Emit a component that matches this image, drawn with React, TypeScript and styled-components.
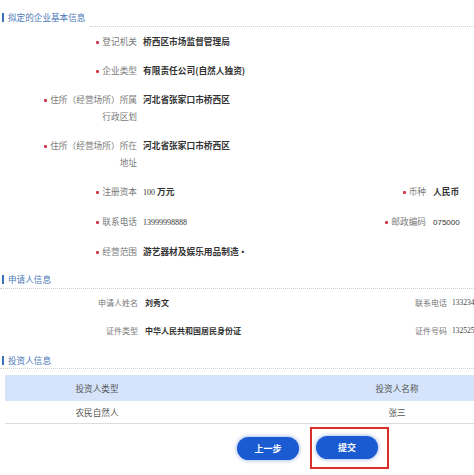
import { Fragment } from "react";
import styled, { createGlobalStyle } from "styled-components";

const GlobalStyle = createGlobalStyle`
  html, body {
    margin: 0;
    padding: 0;
    background: #ffffff;
  }
  body {
    font-family: "Noto Sans CJK SC", "Noto Sans", sans-serif;
    color: #333;
  }
`;

const Page = styled.div`
  width: 474px;
  height: 475px;
  overflow: hidden;
  background: #fff;
`;

const Section = styled.section`
  display: flex;
  flex-direction: column;
`;

const Head = styled.div<{ $pt: number; $pb: number; $inline?: boolean }>`
  display: flex;
  align-items: flex-end;
  padding-top: ${(p) => p.$pt}px;
  padding-bottom: ${(p) => p.$pb}px;
  border-bottom: ${(p) => (p.$inline ? "none" : "1px dotted #cfcfcf")};
`;

const Title = styled.div`
  display: flex;
  align-items: center;
  gap: 4px;
  padding-left: 2px;
  font-size: 8.6px;
  line-height: 15px;
  color: #4a78b8;
  white-space: nowrap;

  &::before {
    content: "";
    display: block;
    width: 2px;
    height: 9px;
    background: #3b6fb6;
  }
`;

const Rule = styled.div`
  flex: 1;
  margin-left: 5px;
  margin-bottom: -2px;
  border-bottom: 1px dotted #cfcfcf;
`;

const FormGrid = styled.div`
  display: grid;
  grid-template-columns: 137px 1fr auto 36px;
  column-gap: 6px;
  padding-right: 6px;
  font-size: 8.7px;
  line-height: 17px;
`;

const Cell = styled.div`
  padding: 6px 0;
  white-space: nowrap;
`;

const Label = styled(Cell)`
  text-align: right;
  color: #7a7a7a;
`;

const Value = styled(Cell)<{ $span?: number }>`
  color: #333;
  font-weight: 700;
  grid-column: span ${(p) => p.$span ?? 1};
`;

const RightValue = styled(Value)`
  margin-left: 1px;
`;

const Star = styled.span`
  display: inline-block;
  width: 3px;
  height: 3px;
  margin-right: 3px;
  vertical-align: middle;
  background: #d2384a;
  border-radius: 1px;
`;

const Num = styled.span<{ $serif?: boolean }>`
  font-family: ${(p) =>
    p.$serif ? '"Liberation Serif", serif' : '"Liberation Sans", sans-serif'};
  font-weight: 400;
  font-size: 8px;
  color: #333;
`;

const ApplicantGrid = styled.div`
  display: grid;
  grid-template-columns: 138px 270px 39px auto;
  font-size: 8px;
  line-height: 16px;
`;

const AppLabel = styled(Cell)`
  text-align: right;
  color: #777;
`;

const AppValue = styled(Cell)`
  color: #333;
  font-weight: 700;
  margin-left: 7px;
`;

const AppNum = styled(Cell)`
  color: #444;
  font-family: "Liberation Serif", serif;
  font-size: 7.5px;
  margin-left: 5px;
`;

const Table = styled.div`
  display: grid;
  grid-template-columns: 184px 416px;
  margin: 6px 0 0 5px;
  font-size: 8.6px;
  color: #555;
`;

const HeadCell = styled.div`
  height: 26px;
  line-height: 26px;
  text-align: center;
  background: #d5e4fb;
`;

const BodyCell = styled.div`
  height: 22px;
  line-height: 22px;
  text-align: center;
  border-bottom: 1px solid #dcdcdc;
`;

const Actions = styled.div`
  display: flex;
  align-items: center;
  gap: 11px;
  padding-left: 237px;
  margin-top: 3px;
`;

const Highlight = styled.div`
  display: flex;
  padding: 7px 9px 8px 4px;
  border: 2px solid #d8302c;
`;

const Button = styled.button`
  width: 62px;
  height: 23px;
  border: none;
  border-radius: 12px;
  background: #1a5bd2;
  color: #fff;
  font-family: "Noto Sans CJK SC", sans-serif;
  font-size: 9px;
  font-weight: 700;
  box-shadow: 0 0 4px rgba(30, 90, 210, 0.55);
  padding: 0;
`;

type Row = {
  label: string[];
  value: React.ReactNode;
  right?: { label: string; value: React.ReactNode };
};

const companyRows: Row[] = [
  { label: ["登记机关"], value: "桥西区市场监督管理局" },
  { label: ["企业类型"], value: "有限责任公司(自然人独资)" },
  { label: ["住所（经营场所）所属", "行政区划"], value: "河北省张家口市桥西区" },
  { label: ["住所（经营场所）所在", "地址"], value: "河北省张家口市桥西区" },
  {
    label: ["注册资本"],
    value: (
      <>
        <Num $serif>100</Num> 万元
      </>
    ),
    right: { label: "币种", value: "人民币" },
  },
  {
    label: ["联系电话"],
    value: <Num $serif>13999998888</Num>,
    right: { label: "邮政编码", value: <Num>075000</Num> },
  },
  { label: ["经营范围"], value: "游艺器材及娱乐用品制造•" },
];

const App = () => {
  return (
    <Page>
      <GlobalStyle />
      <Section>
        <Head $pt={10} $pb={2} $inline>
          <Title>拟定的企业基本信息</Title>
          <Rule />
        </Head>
        <FormGrid>
          {companyRows.map((row) => (
            <Fragment key={row.label.join()}>
              <Label>
                <Star />
                {row.label[0]}
                {row.label[1] && (
                  <>
                    <br />
                    {row.label[1]}
                  </>
                )}
              </Label>
              <Value $span={row.right ? 1 : 3}>{row.value}</Value>
              {row.right && (
                <>
                  <Label>
                    <Star />
                    {row.right.label}
                  </Label>
                  <RightValue>{row.right.value}</RightValue>
                </>
              )}
            </Fragment>
          ))}
        </FormGrid>
      </Section>

      <Section>
        <Head $pt={6} $pb={1}>
          <Title>申请人信息</Title>
        </Head>
        <ApplicantGrid>
          <AppLabel>申请人姓名</AppLabel>
          <AppValue>刘秀文</AppValue>
          <AppLabel>联系电话</AppLabel>
          <AppNum>13323456789</AppNum>
          <AppLabel>证件类型</AppLabel>
          <AppValue>中华人民共和国居民身份证</AppValue>
          <AppLabel>证件号码</AppLabel>
          <AppNum>132525198807150021</AppNum>
        </ApplicantGrid>
      </Section>

      <Section>
        <Head $pt={8} $pb={0}>
          <Title>投资人信息</Title>
        </Head>
        <Table>
          <HeadCell>投资人类型</HeadCell>
          <HeadCell>投资人名称</HeadCell>
          <BodyCell>农民自然人</BodyCell>
          <BodyCell>张三</BodyCell>
        </Table>
      </Section>

      <Actions>
        <Button>上一步</Button>
        <Highlight>
          <Button>提交</Button>
        </Highlight>
      </Actions>
    </Page>
  );
};

export default App;
